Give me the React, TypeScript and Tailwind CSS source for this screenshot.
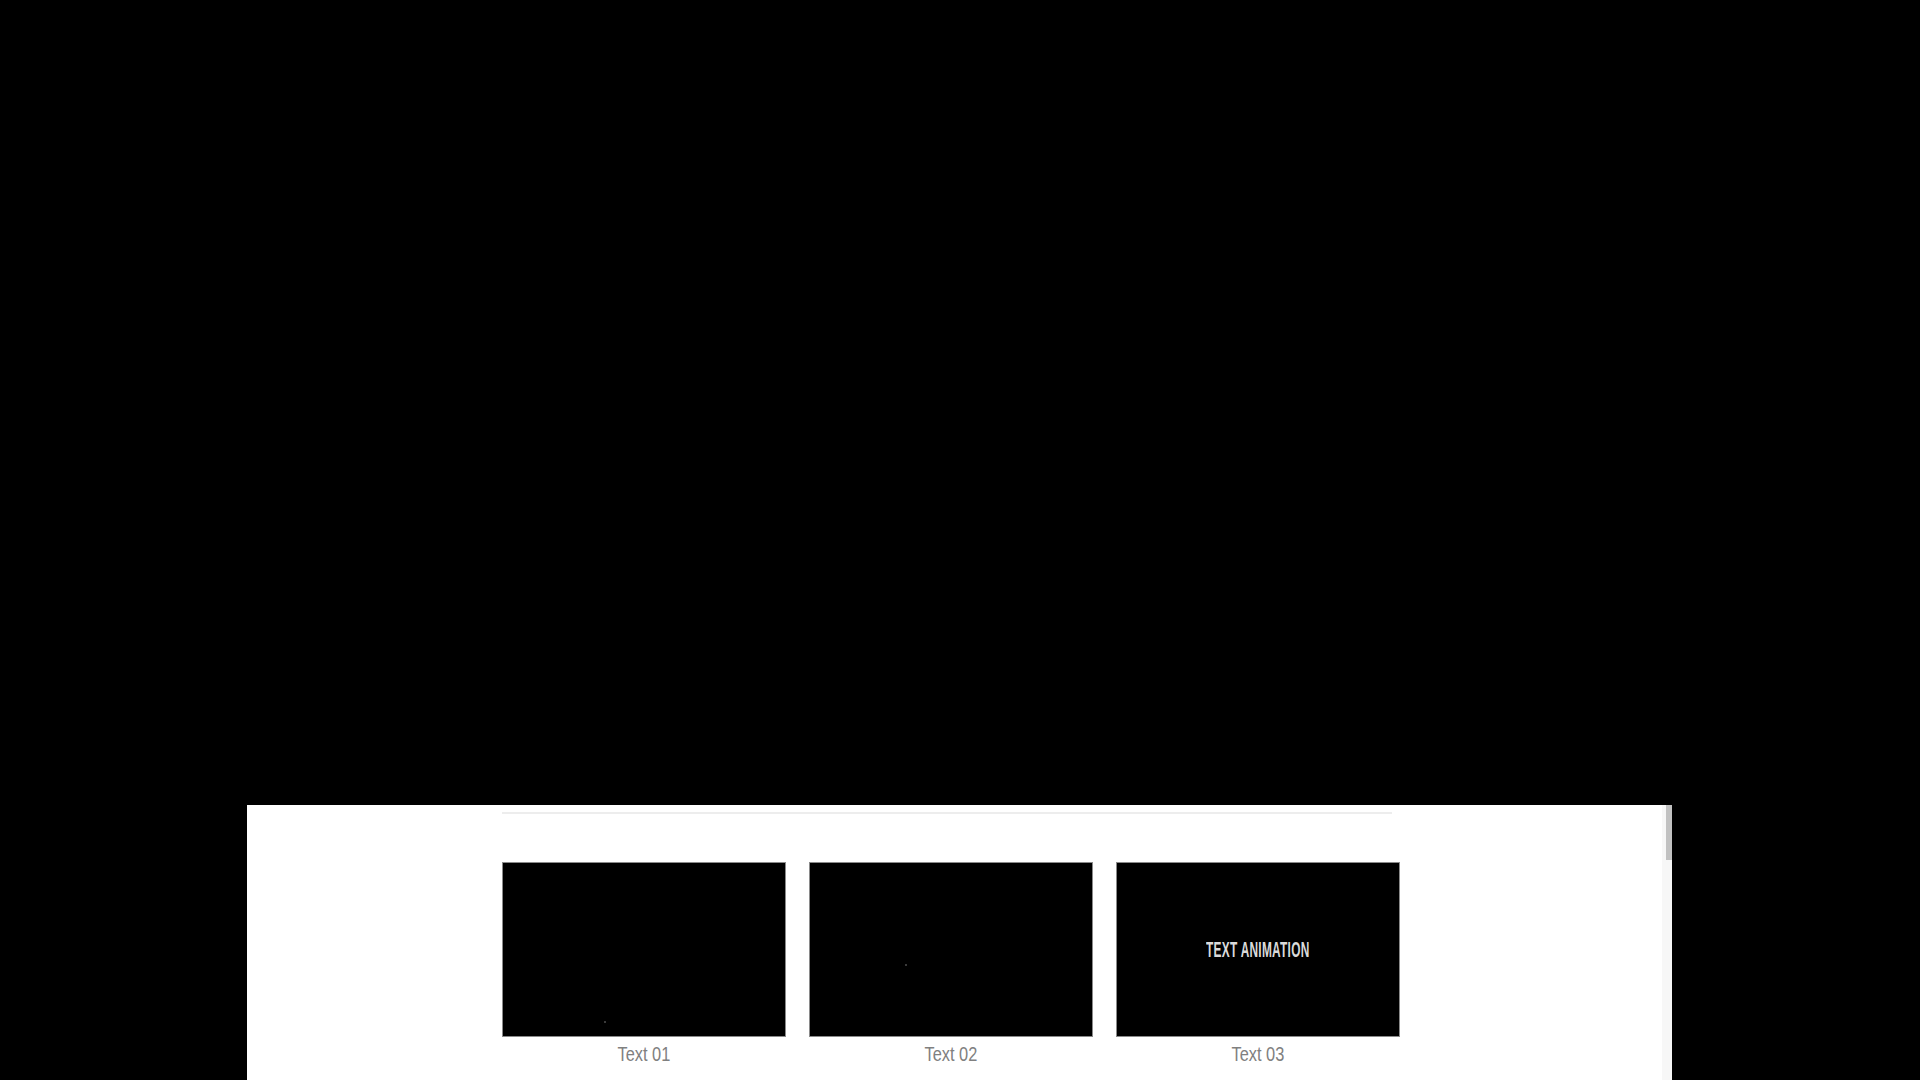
import React from 'react';

const clips = [
  { label: 'Text 01', dot: 'left-[101px] top-[158px]', title: '' },
  { label: 'Text 02', dot: 'left-[95px] top-[101px]', title: '' },
  { label: 'Text 03', dot: '', title: 'TEXT ANIMATION' },
];

function Clip({ label, dot, title }: { label: string; dot: string; title: string }) {
  return (
    <div className="flex flex-col items-center">
      <div className="relative w-[284px] h-[175px] bg-black border border-[#8a8a8a] flex items-center justify-center">
        {dot && <span className={`absolute ${dot} w-[2px] h-[2px] bg-[#3a3a3a]`} />}
        {title && (
          <span className="inline-block scale-x-[0.54] text-[22px] leading-none font-bold text-[#dadada] whitespace-nowrap tracking-[0.5px] font-['Liberation_Sans',Arial,sans-serif]">
            {title}
          </span>
        )}
      </div>
      <div className="mt-[6px] scale-x-[0.78] text-[21px] leading-none text-[#808080] whitespace-nowrap font-['Liberation_Sans',Arial,sans-serif]">
        {label}
      </div>
    </div>
  );
}

export default function App() {
  return (
    <div className="w-full h-screen bg-black overflow-hidden flex flex-col">
      <div className="h-[805px] shrink-0" />
      <div className="relative ml-[247px] w-[1425px] flex-1 bg-white overflow-hidden">
        <div className="pl-[255px] pt-[7px]">
          <div className="h-[2px] w-[890px] bg-[#ededed]" />
          <div className="mt-[48px] flex gap-[23px]">
            {clips.map((c) => (
              <Clip key={c.label} {...c} />
            ))}
          </div>
        </div>

        {/* scrollbar */}
        <div className="absolute right-0 top-0 bottom-0 w-[10px] bg-[#f7f7f7]" />
        <div className="absolute right-0 top-0 w-[6px] h-[55px] bg-[#c1c1c1]" />
      </div>
    </div>
  );
}
